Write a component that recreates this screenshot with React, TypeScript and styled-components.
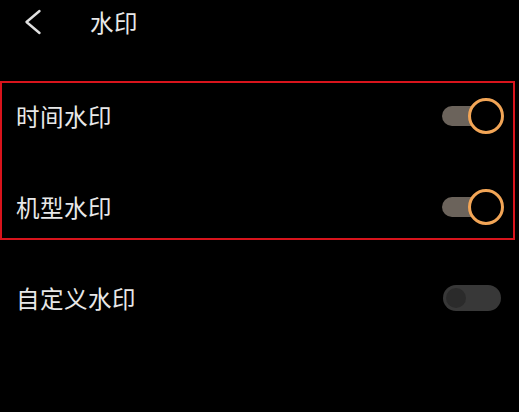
import React from "react";
import styled, { createGlobalStyle } from "styled-components";

const Global = createGlobalStyle`
  html, body { margin: 0; padding: 0; background: #000; }
  body { font-family: "Noto Sans CJK SC", "Noto Sans", sans-serif; color: #e6e6e6; }
  #root { width: 519px; height: 412px; background: #000; overflow: hidden; }
`;

const Page = styled.div`
  display: flex;
  flex-direction: column;
  width: 519px;
  height: 412px;
  background: #000;
`;

const Header = styled.div`
  display: flex;
  align-items: center;
  height: 44px;
  padding-left: 24px;
`;

const BackButton = styled.div`
  display: flex;
  align-items: center;
  width: 18px;
  height: 26px;
  margin-right: 48px;
`;

const Title = styled.div`
  font-size: 23.5px;
  line-height: 26px;
  color: #e8e8e8;
  letter-spacing: 0.5px;
`;

const Highlight = styled.div`
  display: flex;
  flex-direction: column;
  gap: 28px;
  width: 515px;
  box-sizing: border-box;
  margin-top: 37px;
  padding-top: 1px;
  border: 2px solid #d8141c;
`;

const Row = styled.div<{ $inset?: boolean }>`
  display: flex;
  align-items: center;
  justify-content: space-between;
  height: 63px;
  padding: 0 ${(p) => (p.$inset ? "9px" : "18px")} 0 ${(p) => (p.$inset ? "14px" : "16px")};
`;

const Label = styled.div`
  font-size: 23.5px;
  line-height: 26px;
  color: #e8e8e8;
  letter-spacing: 0.5px;
`;

const Plain = styled.div`
  margin-top: 26px;
`;

const SwitchBox = styled.div<{ $on: boolean }>`
  position: relative;
  width: ${(p) => (p.$on ? "62px" : "58px")};
  height: ${(p) => (p.$on ? "36px" : "26px")};
`;

const Track = styled.div<{ $on: boolean }>`
  position: absolute;
  left: 0;
  top: 50%;
  transform: translateY(-50%);
  width: ${(p) => (p.$on ? "46px" : "58px")};
  height: ${(p) => (p.$on ? "20px" : "26px")};
  border-radius: 13px;
  background: ${(p) => (p.$on ? "#6b635b" : "#383838")};
`;

const Thumb = styled.div<{ $on: boolean }>`
  position: absolute;
  top: 50%;
  transform: translateY(-50%);
  box-sizing: border-box;
  ${(p) =>
    p.$on
      ? `right: 0; width: 36px; height: 36px; border: 3.5px solid #f2a556; background: #000;`
      : `left: 3px; width: 20px; height: 20px; background: #2b2b2b;`}
  border-radius: 50%;
`;

const Switch = ({ on }: { on: boolean }) => (
  <SwitchBox $on={on}>
    <Track $on={on} />
    <Thumb $on={on} />
  </SwitchBox>
);

export default function App() {
  return (
    <>
      <Global />
      <Page>
        <Header>
          <BackButton>
            <svg width="18" height="26" viewBox="0 0 18 26">
              <polyline
                points="15.5,2 2.5,13 15.5,24"
                fill="none"
                stroke="#e0e0e0"
                strokeWidth="2.4"
                strokeLinecap="round"
                strokeLinejoin="round"
              />
            </svg>
          </BackButton>
          <Title>水印</Title>
        </Header>
        <Highlight>
          <Row $inset>
            <Label>时间水印</Label>
            <Switch on />
          </Row>
          <Row $inset>
            <Label>机型水印</Label>
            <Switch on />
          </Row>
        </Highlight>
        <Plain>
          <Row>
            <Label>自定义水印</Label>
            <Switch on={false} />
          </Row>
        </Plain>
      </Page>
    </>
  );
}
